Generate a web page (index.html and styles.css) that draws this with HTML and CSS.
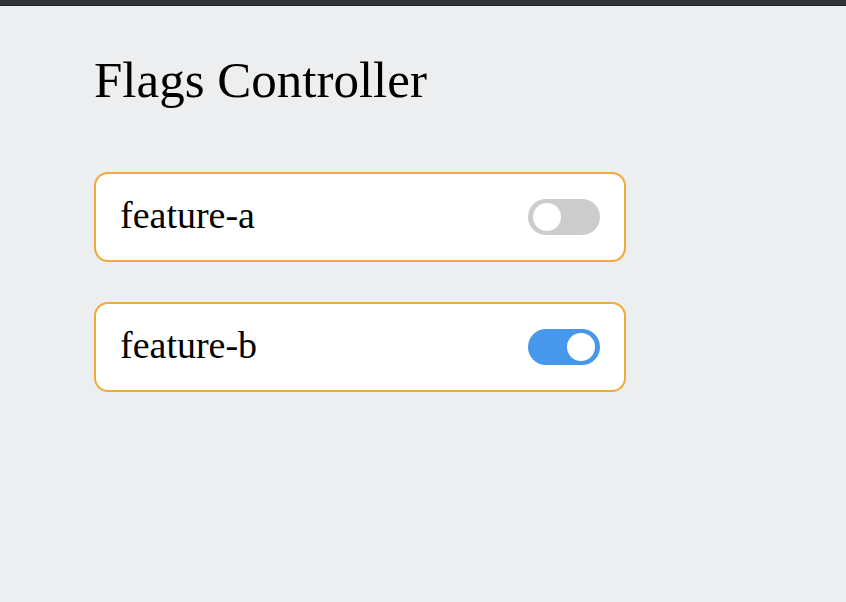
FILE: index.html
```html
<!DOCTYPE html>
<html lang="en">
<head>
    <meta charset="UTF-8">
    <meta name="viewport" content="width=device-width, initial-scale=1.0">
    <title>Flags Controller</title>
    <link rel="stylesheet" href="styles.css">
</head>
<body>
    <div class="top-bar"></div>

    <div class="container">
        <h1 class="title">Flags Controller</h1>

        <div class="flag-list">
            <div class="flag-card">
                <span class="flag-name">feature-a</span>
                <label class="switch">
                    <input type="checkbox">
                    <span class="slider"></span>
                </label>
            </div>

            <div class="flag-card">
                <span class="flag-name">feature-b</span>
                <label class="switch">
                    <input type="checkbox" checked>
                    <span class="slider"></span>
                </label>
            </div>
        </div>
    </div>
</body>
</html>
```

FILE: styles.css
```css
/* Global Styles */
:root {
    --background-color: #edeef0;
    --card-bg: #ffffff;
    --border-color: #f2a93b;
    --toggle-off: #cccccc;
    --toggle-on: #4797eb;
}

body {
    font-family: 'Liberation Serif', 'Times New Roman', serif;
    margin: 0;
    padding: 0;
    background-color: var(--background-color);
    color: #000;
}

.top-bar {
    height: 5px;
    background-color: #333538;
    border-bottom: 1px solid #202122;
}

.container {
    padding: 45px 94px 0;
}

.title {
    font-size: 51px;
    font-weight: 400;
    margin: 0 0 62px;
    line-height: 1.15;
}

/* Flag cards */
.flag-list {
    display: flex;
    flex-direction: column;
    gap: 40px;
    width: 532px;
}

.flag-card {
    display: flex;
    align-items: center;
    justify-content: space-between;
    height: 86px;
    padding: 0 24px;
    background-color: var(--card-bg);
    border: 2px solid var(--border-color);
    border-radius: 14px;
}

.flag-name {
    font-size: 38px;
    position: relative;
    top: -2px;
}

/* Toggle switch */
.switch {
    position: relative;
    display: inline-block;
    width: 72px;
    height: 36px;
}

.switch input {
    opacity: 0;
    width: 0;
    height: 0;
}

.slider {
    position: absolute;
    inset: 0;
    background-color: var(--toggle-off);
    border-radius: 18px;
    cursor: pointer;
    transition: background-color 0.3s ease;
}

.slider::before {
    content: "";
    position: absolute;
    left: 5px;
    top: 4px;
    width: 28px;
    height: 28px;
    border-radius: 50%;
    background-color: #fff;
    transition: transform 0.3s ease;
}

.switch input:checked + .slider {
    background-color: var(--toggle-on);
}

.switch input:checked + .slider::before {
    transform: translateX(34px);
}
```
